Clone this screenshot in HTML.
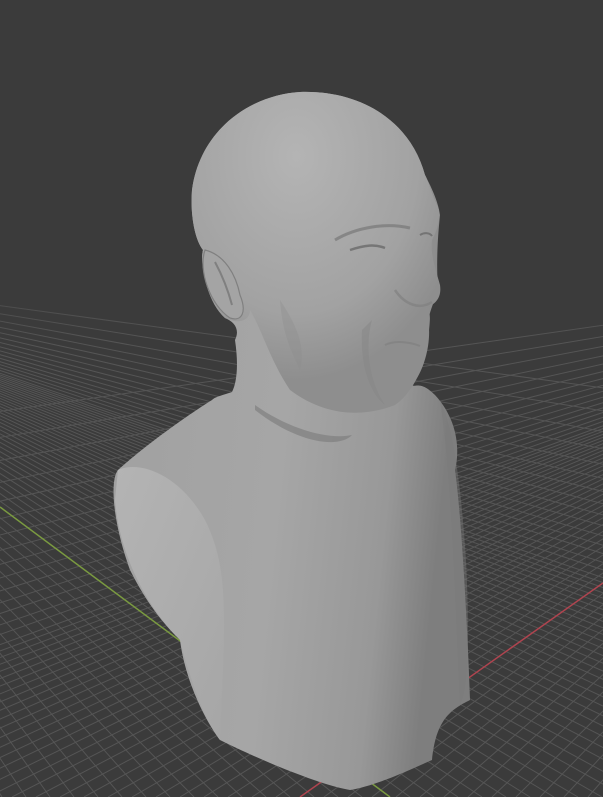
<!DOCTYPE html>
<html><head><meta charset="utf-8"><style>
html,body{margin:0;padding:0;background:#3b3b3b;overflow:hidden}
svg{display:block}
</style></head><body>
<svg width="603" height="797" viewBox="0 0 603 797" xmlns="http://www.w3.org/2000/svg">
<defs>
<linearGradient id="fade" x1="0" y1="0" x2="0" y2="1">
<stop offset="0" stop-color="#3b3b3b" stop-opacity="1"/>
<stop offset="1" stop-color="#3b3b3b" stop-opacity="0"/>
</linearGradient>
<linearGradient id="body" x1="0" y1="0" x2="1" y2="0.2">
<stop offset="0" stop-color="#a0a0a0"/>
<stop offset="0.55" stop-color="#a6a6a6"/>
<stop offset="0.85" stop-color="#989898"/>
<stop offset="1" stop-color="#7e7e7e"/>
</linearGradient>
<radialGradient id="head" cx="0.42" cy="0.2" r="0.7">
<stop offset="0" stop-color="#b4b4b4"/>
<stop offset="0.7" stop-color="#a2a2a2"/>
<stop offset="1" stop-color="#8e8e8e"/>
</radialGradient>
<linearGradient id="cut" x1="0" y1="0" x2="1" y2="1">
<stop offset="0" stop-color="#b4b4b4"/>
<stop offset="1" stop-color="#a6a6a6"/>
</linearGradient>
</defs>
<rect width="603" height="797" fill="#3b3b3b"/>
<g stroke="#555555" stroke-width="1" fill="none">
<path d="M-334 260L-310 797M-334 260L-286 797M-334 260L-262 797M-334 260L-238 797M-334 260L-214 797M-334 260L-190 797M-334 260L-166 797M-334 260L-142 797M-334 260L-118 797M-334 260L-94 797M-334 260L-70 797M-334 260L-46 797M-334 260L-22 797M-334 260L2 797M-334 260L26 797M-334 260L50 797M-334 260L74 797M-334 260L98 797M-334 260L122 797M-334 260L146 797M-334 260L170 797M-334 260L194 797M-334 260L218 797M-334 260L242 797M-334 260L266 797M-334 260L290 797M-334 260L314 797M-334 260L338 797M-334 260L362 797M-334 260L410 797M-334 260L434 797M-334 260L458 797M-334 260L482 797M-334 260L506 797M-334 260L530 797M-334 260L554 797M-334 260L578 797M-334 260L602 797M-334 260L626 797M-334 260L650 797M-334 260L674 797M-334 260L698 797M-334 260L722 797M-334 260L746 797M-334 260L770 797M-334 260L794 797M-334 260L818 797M-334 260L842 797M-334 260L866 797M-334 260L890 797M-334 260L914 797M-334 260L938 797M-334 260L962 797M-334 260L986 797M-334 260L1010 797M-334 260L1034 797M-334 260L1058 797M-334 260L1082 797M-334 260L1106 797M-334 260L1130 797M-334 260L1154 797M-334 260L1178 797M-334 260L1202 797M-334 260L1226 797M-334 260L1250 797M-334 260L1290 797M-334 260L1330 797M-334 260L1380 797M-334 260L1430 797M-334 260L1490 797M-334 260L1560 797M-334 260L1640 797M-334 260L1730 797M-334 260L1840 797M-334 260L1970 797M-334 260L2130 797M-334 260L2330 797M-334 260L2600 797M-334 260L3000 797M-334 260L3600 797"/>
<path d="M1060 260L1020 797M1060 260L996 797M1060 260L972 797M1060 260L948 797M1060 260L924 797M1060 260L900 797M1060 260L876 797M1060 260L852 797M1060 260L828 797M1060 260L804 797M1060 260L780 797M1060 260L756 797M1060 260L732 797M1060 260L708 797M1060 260L684 797M1060 260L660 797M1060 260L636 797M1060 260L612 797M1060 260L588 797M1060 260L564 797M1060 260L540 797M1060 260L516 797M1060 260L492 797M1060 260L468 797M1060 260L444 797M1060 260L420 797M1060 260L396 797M1060 260L372 797M1060 260L348 797M1060 260L324 797M1060 260L276 797M1060 260L252 797M1060 260L228 797M1060 260L204 797M1060 260L180 797M1060 260L156 797M1060 260L132 797M1060 260L108 797M1060 260L84 797M1060 260L60 797M1060 260L36 797M1060 260L12 797M1060 260L-12 797M1060 260L-36 797M1060 260L-60 797M1060 260L-84 797M1060 260L-108 797M1060 260L-132 797M1060 260L-156 797M1060 260L-180 797M1060 260L-204 797M1060 260L-228 797M1060 260L-252 797M1060 260L-276 797M1060 260L-300 797M1060 260L-324 797M1060 260L-348 797M1060 260L-372 797M1060 260L-396 797M1060 260L-420 797M1060 260L-460 797M1060 260L-500 797M1060 260L-550 797M1060 260L-600 797M1060 260L-660 797M1060 260L-730 797M1060 260L-810 797M1060 260L-900 797M1060 260L-1010 797M1060 260L-1140 797M1060 260L-1300 797M1060 260L-1500 797M1060 260L-1780 797M1060 260L-2150 797M1060 260L-2700 797"/>
</g>
<line x1="0" y1="507" x2="390" y2="797" stroke="#7a9a40" stroke-width="1.5"/>
<line x1="603" y1="583" x2="300" y2="797" stroke="#b0444f" stroke-width="1.5"/>
<rect x="0" y="220" width="603" height="120" fill="url(#fade)"/>
<rect x="0" y="0" width="603" height="220" fill="#3b3b3b"/>
<!-- bust -->
<path d="M300 92 C250 95 200 130 192 190 C190 215 195 240 203 250 C200 260 205 300 225 318 C235 322 240 330 235 340 C238 360 238 380 232 392 C220 396 215 397 212 400 C180 420 140 450 118 470 C110 480 112 520 130 570 C150 610 170 630 180 640 C185 680 205 720 220 740 C260 760 320 785 350 790 C380 785 420 765 432 760 C436 720 450 710 470 700 C468 640 462 520 455 470 C460 450 458 420 435 395 C420 380 415 388 412 385 C425 370 432 340 428 320 C432 305 435 300 438 290 C436 260 438 235 440 215 C438 200 430 185 425 175 C410 120 360 90 300 92 Z" fill="url(#body)"/>
<path d="M300 92 C250 95 200 130 192 190 C190 215 195 240 203 250 C200 260 205 300 225 318 C240 325 250 320 250 310 C262 330 270 360 290 390 C330 420 370 415 395 405 C410 395 425 370 428 340 C430 320 432 310 425 308 C435 305 442 298 440 285 C436 270 430 255 432 240 C440 225 441 212 437 205 C430 190 428 180 425 175 C410 120 360 90 300 92 Z" fill="url(#head)"/>
<path d="M118 470 C140 460 180 475 205 520 C230 570 225 620 220 740 C205 720 190 680 180 640 C150 610 120 560 115 500 Z" fill="url(#cut)"/>
<path d="M255 405 C290 430 330 440 352 435 C340 448 300 445 255 410 Z" fill="#7a7a7a" opacity="0.6"/>
<path d="M205 250 C198 270 210 305 230 318 C242 322 247 312 240 295 C236 275 225 255 205 250 Z" fill="#a4a4a4" stroke="#808080" stroke-width="1.2"/>
<path d="M215 262 C222 275 228 290 232 305" stroke="#808080" stroke-width="2" fill="none"/>
<path d="M335 240 C355 228 385 222 410 228" stroke="#777" stroke-width="3" fill="none" opacity="0.7"/>
<path d="M350 250 C365 245 375 244 385 248" stroke="#6a6a6a" stroke-width="2.5" fill="none" opacity="0.8"/>
<path d="M420 235 C425 232 430 233 432 236" stroke="#6a6a6a" stroke-width="2" fill="none" opacity="0.8"/>
<path d="M395 290 C405 305 420 310 432 302" stroke="#808080" stroke-width="2.5" fill="none" opacity="0.7"/>
<path d="M385 345 C395 340 410 342 420 346" stroke="#808080" stroke-width="2" fill="none" opacity="0.7"/>
<path d="M372 320 C365 345 368 380 385 405 C372 395 360 370 362 330 Z" fill="#858585" opacity="0.5"/>
<path d="M280 300 C300 330 305 350 300 370 C290 350 282 330 280 300 Z" fill="#8c8c8c" opacity="0.35"/>
<path d="M440 400 C455 430 462 500 466 560 C470 640 468 690 460 705 C455 600 452 480 440 400 Z" fill="#7a7a7a" opacity="0.45"/>
</svg>
</body></html>
